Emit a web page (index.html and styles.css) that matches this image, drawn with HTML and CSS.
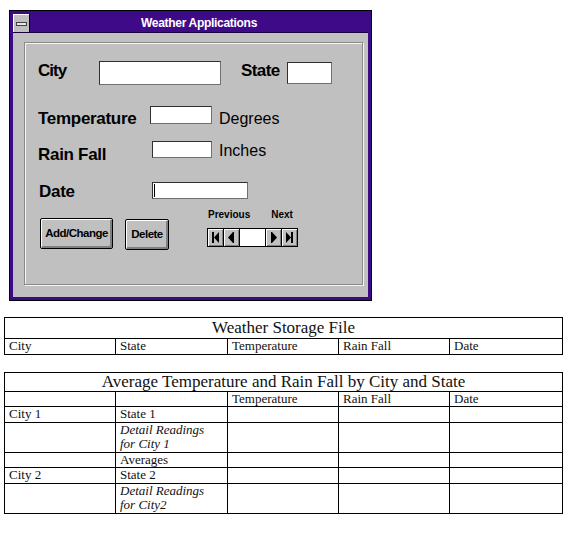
FILE: index.html
```html
<!DOCTYPE html>
<html>
<head>
<meta charset="utf-8">
<link rel="stylesheet" href="styles.css">
</head>
<body>
<div class="window">
  <div class="client">
    <div class="titlebar">
      <div class="sysbox"><span class="sysdash"></span></div>
      <div class="title">Weather Applications</div>
    </div>
    <div class="panel">
      <div class="row r1">
        <span class="lbl l-city">City</span>
        <span class="field f-city"></span>
        <span class="lbl l-state">State</span>
        <span class="field f-state"></span>
      </div>
      <div class="row r2">
        <span class="lbl l-temp">Temperature</span>
        <span class="field f-temp"></span>
        <span class="unit u-deg">Degrees</span>
      </div>
      <div class="row r3">
        <span class="lbl l-rain">Rain Fall</span>
        <span class="field f-rain"></span>
        <span class="unit u-inch">Inches</span>
      </div>
      <div class="row r4">
        <span class="lbl l-date">Date</span>
        <span class="field f-date"><span class="caret"></span></span>
      </div>
      <div class="row r5">
        <div class="btn b-add">Add/Change</div>
        <div class="btn b-del">Delete</div>
        <div class="navgroup">
          <div class="navlabels">
            <span class="nl-prev">Previous</span>
            <span class="nl-next">Next</span>
          </div>
          <div class="nav">
            <div class="nb"><svg width="15" height="17" viewBox="0 0 15 17"><rect x="4" y="3" width="2" height="11" fill="#000"/><polygon points="11,3 6,8.5 11,14" fill="#000"/></svg></div>
            <div class="nb"><svg width="15" height="17" viewBox="0 0 15 17"><polygon points="9,3 4,8.5 9,14" fill="#000"/><rect x="9" y="3" width="1" height="11" fill="#000"/></svg></div>
            <div class="navfield"></div>
            <div class="nb"><svg width="15" height="17" viewBox="0 0 15 17"><rect x="5" y="3" width="1" height="11" fill="#000"/><polygon points="6,3 11,8.5 6,14" fill="#000"/></svg></div>
            <div class="nb last"><svg width="15" height="17" viewBox="0 0 15 17"><polygon points="4,3 9,8.5 4,14" fill="#000"/><rect x="9" y="3" width="2" height="11" fill="#000"/></svg></div>
          </div>
        </div>
      </div>
    </div>
  </div>
</div>

<table class="tbl t1">
  <colgroup><col class="c1"><col class="c2"><col class="c3"><col class="c4"><col class="c5"></colgroup>
  <tr><td class="ttl ttl1" colspan="5">Weather Storage File</td></tr>
  <tr><td>City</td><td>State</td><td>Temperature</td><td>Rain Fall</td><td>Date</td></tr>
</table>

<table class="tbl t2">
  <colgroup><col class="c1"><col class="c2"><col class="c3"><col class="c4"><col class="c5"></colgroup>
  <tr><td class="ttl" colspan="5">Average Temperature and Rain Fall by City and State</td></tr>
  <tr><td></td><td></td><td>Temperature</td><td>Rain Fall</td><td>Date</td></tr>
  <tr><td>City 1</td><td>State 1</td><td></td><td></td><td></td></tr>
  <tr><td></td><td class="it">Detail Readings<br>for City 1</td><td></td><td></td><td></td></tr>
  <tr><td></td><td>Averages</td><td></td><td></td><td></td></tr>
  <tr><td>City 2</td><td>State 2</td><td></td><td></td><td></td></tr>
  <tr><td></td><td class="it">Detail Readings<br>for City2</td><td></td><td></td><td></td></tr>
</table>
</body>
</html>
```
FILE: styles.css
```css
body {
  margin: 0;
  background: #fff;
  font-family: "Liberation Sans", Arial, sans-serif;
  color: #000;
}

.window {
  margin: 10px 0 0 9px;
  width: 363px;
  height: 291px;
  box-sizing: border-box;
  border: 1px solid #000;
  background: #3d0a86;
  padding: 3px;
}

.client {
  background: #c0c0c0;
  height: 100%;
  display: flex;
  flex-direction: column;
}

.titlebar {
  height: 18px;
  display: flex;
  background: #3f0a88;
  border-bottom: 1px solid #1a0040;
}

.sysbox {
  width: 16px;
  background: #c0c0c0;
  border-right: 1px solid #000;
  box-shadow: inset 1px 1px #fff;
  display: flex;
  align-items: center;
  justify-content: center;
}

.sysdash {
  display: block;
  width: 11px;
  height: 4px;
  box-sizing: border-box;
  border: 1px solid #404040;
  background: #e8e8e8;
  margin-top: 1px;
}

.title {
  flex: 1;
  text-align: center;
  color: #fff;
  font-weight: bold;
  font-size: 12px;
  letter-spacing: -0.3px;
  line-height: 18px;
}

.panel {
  margin: 9px 0 0 11px;
  width: 339px;
  height: 243px;
  box-sizing: border-box;
  border: 1px solid #8a8a8a;
  box-shadow: inset 1px 1px #f4f4f4, 1px 1px #f4f4f4;
  padding: 18px 0 0 13px;
  display: flex;
  flex-direction: column;
}

.row {
  display: flex;
  align-items: flex-start;
}

.r1 { height: 24px; }
.r2 { height: 18px; margin-top: 21px; }
.r3 { height: 17px; margin-top: 17px; }
.r4 { height: 17px; margin-top: 24px; }
.r5 { margin-top: 10px; }

.lbl {
  display: block;
  font-weight: bold;
  font-size: 17px;
  line-height: 20px;
  letter-spacing: -0.3px;
  white-space: nowrap;
}

.l-city { width: 61px; letter-spacing: -1px; }
.l-state { width: 46px; margin-left: 20px; letter-spacing: -0.6px; }
.l-temp { width: 112px; margin-top: 3px; }
.l-rain { width: 114px; margin-top: 4px; }
.l-date { width: 113px; margin-left: 1px; }

.unit {
  display: block;
  font-size: 16px;
  line-height: 18px;
  margin-left: 7px;
  white-space: nowrap;
}

.u-deg { margin-top: 4px; }
.u-inch { margin-top: 1px; }

.field {
  display: block;
  box-sizing: border-box;
  background: #fff;
  border: 1px solid;
  border-color: #303030 #707070 #707070 #303030;
}

.f-city { width: 122px; height: 24px; }
.f-state { width: 45px; height: 22px; margin-top: 1px; }
.f-temp { width: 62px; height: 18px; }
.f-rain { width: 60px; height: 17px; }
.f-date { width: 96px; height: 17px; }

.caret {
  display: block;
  width: 1px;
  height: 13px;
  margin: 1px 0 0 1px;
  background: #000;
}

.btn {
  box-sizing: border-box;
  height: 31px;
  border: 1px solid #000;
  border-radius: 2px;
  background: #c0c0c0;
  box-shadow: inset 1px 1px #fff, inset -2px -2px #808080;
  display: flex;
  align-items: center;
  justify-content: center;
  font-weight: bold;
  font-size: 11.5px;
  letter-spacing: -0.5px;
  padding-bottom: 1px;
}

.b-add { width: 73px; margin: 9px 0 0 2px; }
.b-del { width: 44px; margin: 10px 0 0 12px; }

.navgroup {
  margin-left: 38px;
  display: flex;
  flex-direction: column;
}

.navlabels {
  display: flex;
  font-weight: bold;
  font-size: 10px;
  line-height: 12px;
}

.nl-prev { margin-left: 1px; }
.nl-next { margin-left: 21px; }

.nav {
  margin-top: 7px;
  width: 91px;
  height: 19px;
  box-sizing: border-box;
  border: 1px solid #000;
  display: flex;
}

.nb {
  width: 15px;
  height: 17px;
  border-right: 1px solid #000;
  background: #c0c0c0;
  box-shadow: inset 1px 1px #fff, inset -1px -1px #808080;
}

.nb svg { display: block; }

.nb.last { border-right: none; }

.navfield {
  width: 25px;
  height: 17px;
  background: #fff;
  border-right: 1px solid #000;
}

.tbl {
  border-collapse: collapse;
  table-layout: fixed;
  width: 558px;
  margin-left: 4px;
  font-family: "Liberation Serif", "Times New Roman", serif;
  font-size: 13px;
  color: #111;
}

.t1 { margin-top: 16px; }
.t2 { margin-top: 17px; }

.c1 { width: 111px; }
.c2 { width: 112px; }
.c3 { width: 111px; }
.c4 { width: 111px; }
.c5 { width: 113px; }

.tbl td {
  border: 1px solid #000;
  padding: 0 4px;
  line-height: 14.5px;
  vertical-align: top;
  white-space: nowrap;
}

.tbl td.ttl {
  text-align: center;
  font-size: 17px;
  line-height: 18px;
  padding: 0;
}

.tbl td.ttl1 { line-height: 20px; }

.tbl td.it { font-style: italic; }
```
